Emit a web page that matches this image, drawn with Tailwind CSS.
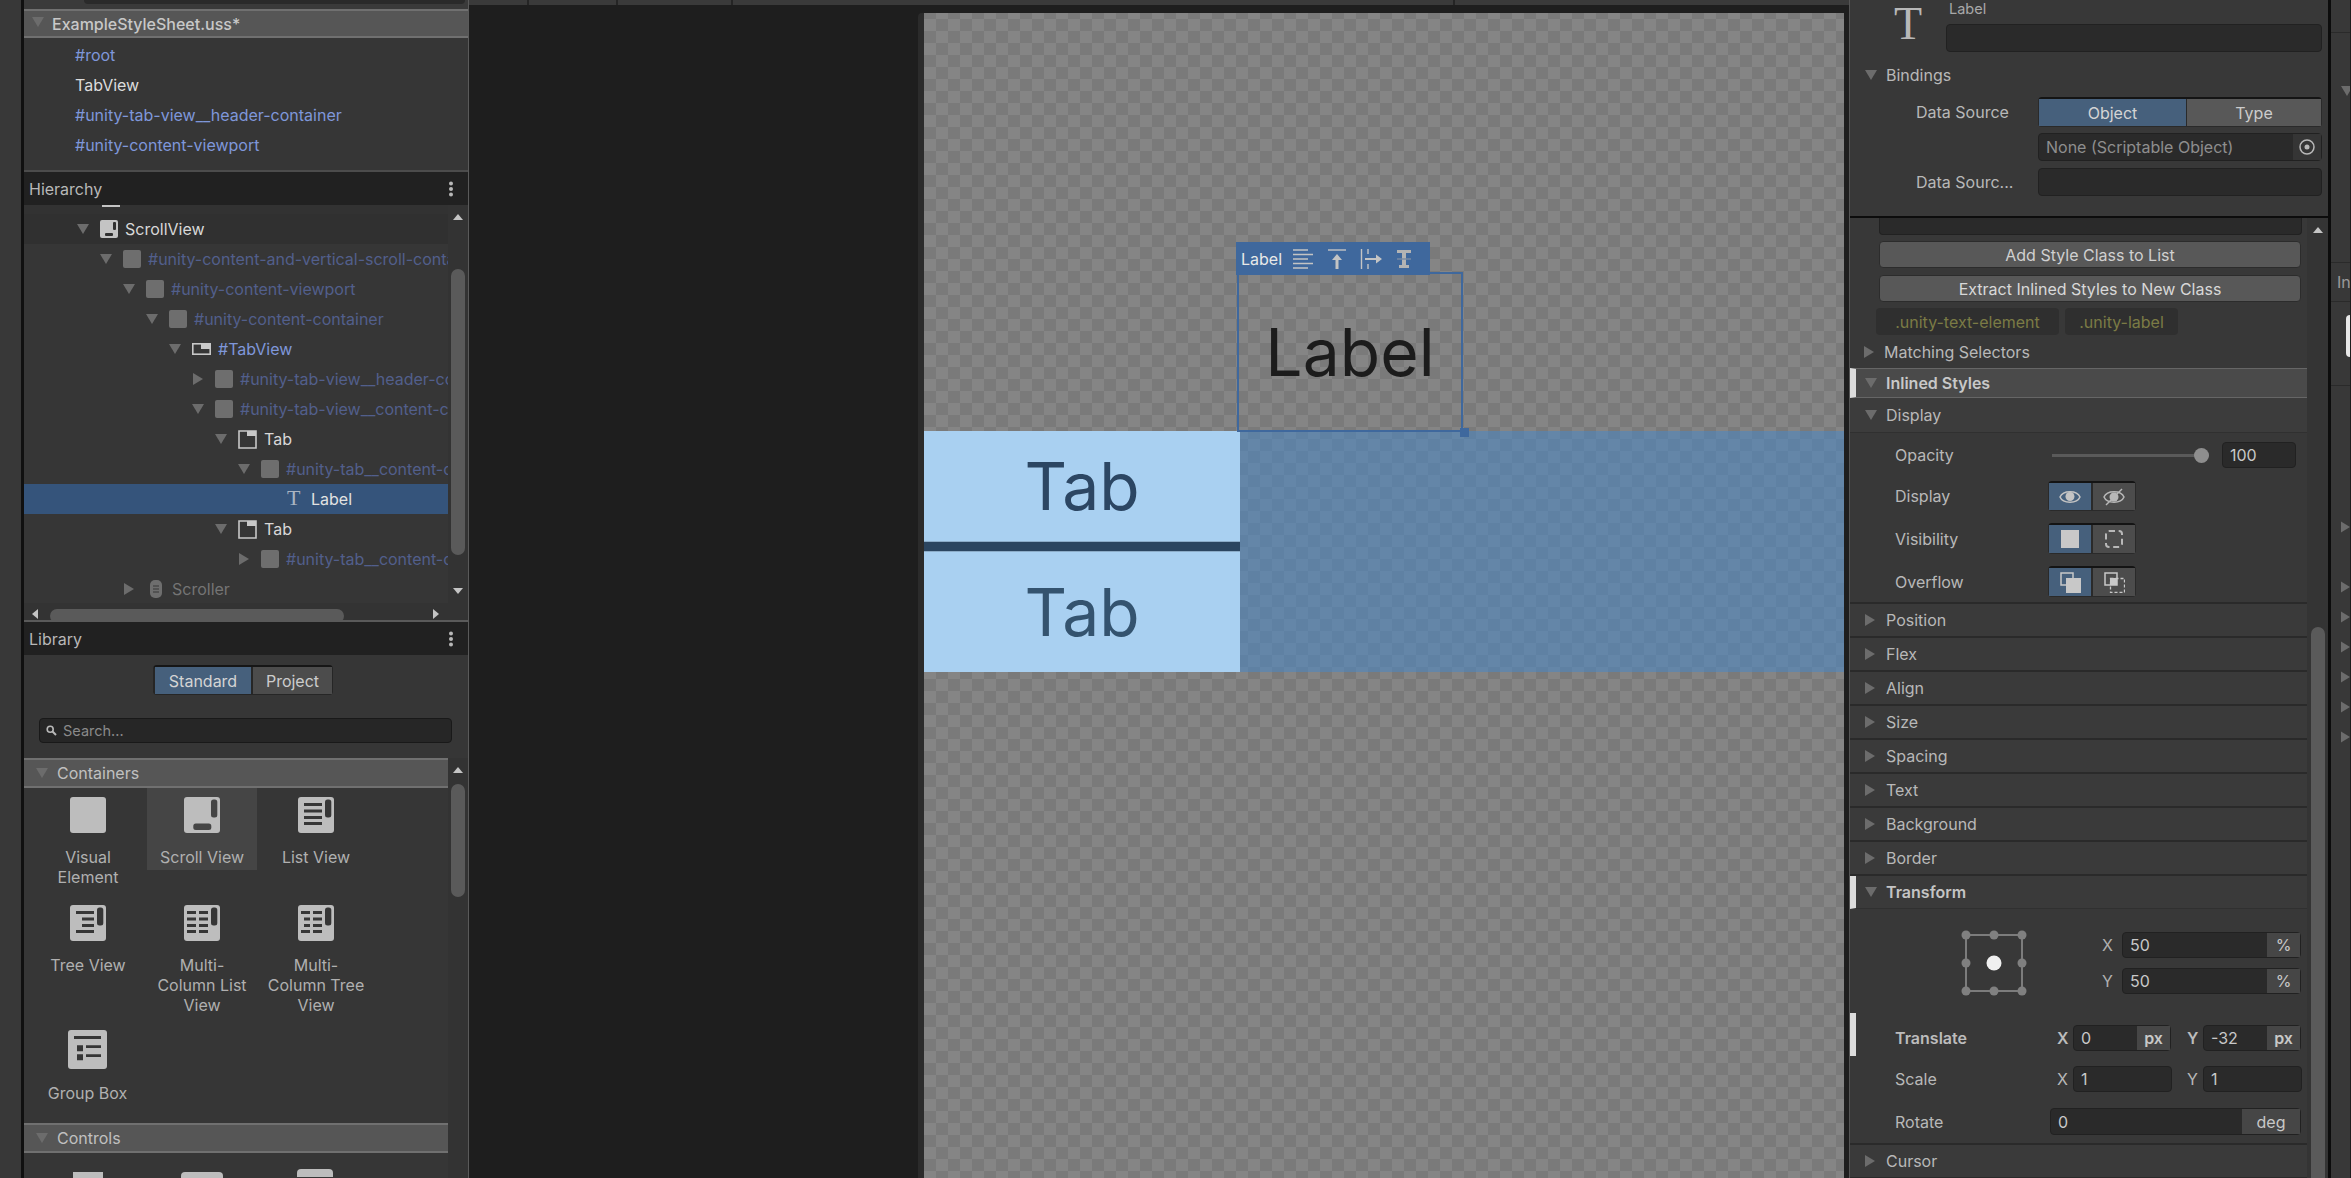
<!DOCTYPE html>
<html lang="en">
<head>
  <meta charset="UTF-8">
  <title>UI Builder</title>
  <script src="https://cdn.jsdelivr.net/npm/@tailwindcss/browser@4"></script>
</head>
<body class="bg-[#1e1e1e] overflow-hidden font-['Inter',sans-serif] text-[16px] leading-5 text-[#b8b8b8]">
  <svg class="hidden">
    <symbol id="down" viewBox="0 0 12 10"><path d="M0 0h12L6 10z" fill="#6c6c6c"/></symbol>
    <symbol id="right" viewBox="0 0 10 12"><path d="M0 0v12l10-6z" fill="#6c6c6c"/></symbol>
    <symbol id="sq" viewBox="0 0 18 18"><rect width="18" height="18" rx="2" fill="#6e6e6e"/></symbol>
    <symbol id="tab" viewBox="0 0 19 19"><path d="M1 1h17v17H1z" fill="none" stroke="#c8c8c8" stroke-width="1.6"/><path d="M9 1h9v5H9z" fill="#c8c8c8"/></symbol>
    <symbol id="dots" viewBox="0 0 6 16"><circle cx="3" cy="2.5" r="2" fill="#b8b8b8"/><circle cx="3" cy="8" r="2" fill="#b8b8b8"/><circle cx="3" cy="13.5" r="2" fill="#b8b8b8"/></symbol>
  </svg>

  <div class="flex w-[2351px] h-[1178px]">
    <!-- left edge -->
    <div class="w-[21px] bg-[#383838]"></div>
    <div class="w-[3px] bg-[#101010]"></div>

    <!-- left column -->
    <div class="w-[445px] flex flex-col border-r border-[#5a5a5a] bg-[#363636] overflow-hidden shrink-0">
      <div class="h-[9px] bg-[#3a3a3a] pl-[60px]"><div class="h-[4px] w-[381px] bg-[#2a2a2a] rounded-b"></div></div>
      <div class="h-[29px] bg-[#565656] border-y-2 border-[#707070] flex items-center pl-[8px] font-medium text-[#c8c8c8]">
        <svg class="w-[12px] h-[10px] mr-[8px] -mt-[3px]"><use href="#down"/></svg>ExampleStyleSheet.uss*
      </div>
      <div class="h-[132px] pt-[2px] pl-[51px] text-[#7f97da]">
        <div class="h-[30px] flex items-center">#root</div>
        <div class="h-[30px] flex items-center text-[#dcdcdc]">TabView</div>
        <div class="h-[30px] flex items-center">#unity-tab-view__header-container</div>
        <div class="h-[30px] flex items-center">#unity-content-viewport</div>
      </div>
      <div class="h-[2px] bg-[#4c4c4c]"></div>
      <div class="h-[33px] bg-[#212121] flex items-center justify-between pl-[5px] pr-[14px]">
        <span>Hierarchy</span><svg class="w-[6px] h-[16px]"><use href="#dots"/></svg>
      </div>

      <!-- hierarchy tree -->
      <div class="h-[398px] flex">
        <div class="w-[424px] overflow-hidden whitespace-nowrap text-[#525f8c]">
          <div class="h-[9px] bg-[#323232] pl-[78px]"><div class="w-[18px] h-[2px] bg-[#c4c4c4]"></div></div>
          <div class="h-[30px] flex items-center pl-[53px] bg-[#303030] text-[#d8d8d8]">
            <svg class="w-[12px] h-[10px] mr-[11px] shrink-0"><use href="#down"/></svg>
            <svg class="w-[18px] h-[18px] mr-[7px] shrink-0" viewBox="0 0 18 18"><rect width="18" height="18" rx="2" fill="#c4c4c4"/><rect x="13" y="2" width="3" height="8" rx="1" fill="#303030"/><rect x="5" y="13" width="8" height="3" rx="1" fill="#303030"/></svg>ScrollView
          </div>
          <div class="h-[30px] flex items-center pl-[76px]">
            <svg class="w-[12px] h-[10px] mr-[11px] shrink-0"><use href="#down"/></svg>
            <svg class="w-[18px] h-[18px] mr-[7px] shrink-0"><use href="#sq"/></svg>#unity-content-and-vertical-scroll-container
          </div>
          <div class="h-[30px] flex items-center pl-[99px]">
            <svg class="w-[12px] h-[10px] mr-[11px] shrink-0"><use href="#down"/></svg>
            <svg class="w-[18px] h-[18px] mr-[7px] shrink-0"><use href="#sq"/></svg>#unity-content-viewport
          </div>
          <div class="h-[30px] flex items-center pl-[122px]">
            <svg class="w-[12px] h-[10px] mr-[11px] shrink-0"><use href="#down"/></svg>
            <svg class="w-[18px] h-[18px] mr-[7px] shrink-0"><use href="#sq"/></svg>#unity-content-container
          </div>
          <div class="h-[30px] flex items-center pl-[145px] text-[#7f97da]">
            <svg class="w-[12px] h-[10px] mr-[11px] shrink-0"><use href="#down"/></svg>
            <svg class="w-[19px] h-[12px] mr-[7px] shrink-0" viewBox="0 0 19 12"><rect x=".8" y=".8" width="17.4" height="10.4" fill="none" stroke="#c8c8c8" stroke-width="1.6"/><rect x="9" y="1" width="9" height="5" fill="#c8c8c8"/></svg>#TabView
          </div>
          <div class="h-[30px] flex items-center pl-[169px]">
            <svg class="w-[10px] h-[12px] mr-[12px] shrink-0"><use href="#right"/></svg>
            <svg class="w-[18px] h-[18px] mr-[7px] shrink-0"><use href="#sq"/></svg>#unity-tab-view__header-container
          </div>
          <div class="h-[30px] flex items-center pl-[168px]">
            <svg class="w-[12px] h-[10px] mr-[11px] shrink-0"><use href="#down"/></svg>
            <svg class="w-[18px] h-[18px] mr-[7px] shrink-0"><use href="#sq"/></svg>#unity-tab-view__content-container
          </div>
          <div class="h-[30px] flex items-center pl-[191px] text-[#d8d8d8]">
            <svg class="w-[12px] h-[10px] mr-[11px] shrink-0"><use href="#down"/></svg>
            <svg class="w-[19px] h-[19px] mr-[7px] shrink-0"><use href="#tab"/></svg>Tab
          </div>
          <div class="h-[30px] flex items-center pl-[214px]">
            <svg class="w-[12px] h-[10px] mr-[11px] shrink-0"><use href="#down"/></svg>
            <svg class="w-[18px] h-[18px] mr-[7px] shrink-0"><use href="#sq"/></svg>#unity-tab__content-container
          </div>
          <div class="h-[30px] flex items-center pl-[263px] bg-[#35547b] text-[#e2e2e2]">
            <span class="font-['Liberation_Serif',serif] text-[22px] text-[#aab4c2] w-[24px] -mt-[3px]">T</span>Label
          </div>
          <div class="h-[30px] flex items-center pl-[191px] text-[#d8d8d8]">
            <svg class="w-[12px] h-[10px] mr-[11px] shrink-0"><use href="#down"/></svg>
            <svg class="w-[19px] h-[19px] mr-[7px] shrink-0"><use href="#tab"/></svg>Tab
          </div>
          <div class="h-[30px] flex items-center pl-[215px]">
            <svg class="w-[10px] h-[12px] mr-[12px] shrink-0"><use href="#right"/></svg>
            <svg class="w-[18px] h-[18px] mr-[7px] shrink-0"><use href="#sq"/></svg>#unity-tab__content-container
          </div>
          <div class="h-[30px] flex items-center pl-[100px] text-[#747474]">
            <svg class="w-[10px] h-[12px] mr-[16px] shrink-0"><use href="#right"/></svg>
            <svg class="w-[12px] h-[18px] mr-[10px] shrink-0" viewBox="0 0 12 18"><rect width="12" height="18" rx="5" fill="#6e6e6e"/><path d="M3 6h6M3 9h6M3 12h6" stroke="#363636"/></svg>Scroller
          </div>
        </div>
        <div class="w-[20px] bg-[#333333] flex flex-col items-center">
          <svg class="w-[10px] h-[6px] mt-[9px]" viewBox="0 0 10 6"><path d="M0 6h10L5 0z" fill="#c4c4c4"/></svg>
          <div class="w-[14px] h-[286px] mt-[49px] rounded-full bg-[#5a5a5a]"></div>
          <svg class="w-[10px] h-[6px] mt-[33px]" viewBox="0 0 10 6"><path d="M0 0h10L5 6z" fill="#c4c4c4"/></svg>
        </div>
      </div>
      <div class="h-[17px] bg-[#333333] flex items-center pl-[8px]">
        <svg class="w-[6px] h-[10px] mt-[4px]" viewBox="0 0 6 10"><path d="M6 0v10L0 5z" fill="#c4c4c4"/></svg>
        <div class="w-[294px] h-[14px] ml-[12px] mt-[8px] rounded-full bg-[#5a5a5a]"></div>
        <svg class="w-[6px] h-[10px] ml-[89px] mt-[4px]" viewBox="0 0 6 10"><path d="M0 0v10l6-5z" fill="#c4c4c4"/></svg>
      </div>
      <div class="h-[2px] bg-[#5a5a5a]"></div>

      <!-- library -->
      <div class="h-[33px] bg-[#212121] flex items-center justify-between pl-[5px] pr-[14px]">
        <span>Library</span><svg class="w-[6px] h-[16px]"><use href="#dots"/></svg>
      </div>
      <div class="mt-[10px] ml-[129px] w-[180px] h-[30px] flex bg-[#262626] rounded border border-[#262626] border-t-2 border-t-[#161616] text-center">
        <div class="w-[96px] ml-px bg-[#46607c] text-[#d4d4d4] flex items-center justify-center">Standard</div>
        <div class="w-[79px] ml-[2px] bg-[#4c4c4c] text-[#cccccc] flex items-center justify-center">Project</div>
      </div>
      <div class="mt-[23px] ml-[15px] w-[413px] h-[25px] bg-[#262626] border border-[#191919] rounded flex items-center pl-[6px] text-[14.5px] text-[#8a8a8a]">
        <svg class="w-[11px] h-[11px] mr-[6px]" viewBox="0 0 11 11"><circle cx="4.2" cy="4.2" r="3" fill="none" stroke="#b8b8b8" stroke-width="1.6"/><path d="M6.5 6.5 10 10" stroke="#b8b8b8" stroke-width="2"/></svg>Search...
      </div>
      <div class="mt-[15px] flex h-[420px]">
        <div class="w-[424px] overflow-hidden">
          <div class="h-[30px] bg-[#565656] border-y-2 border-[#707070] flex items-center pl-[12px] text-[#c0c0c0]">
            <svg class="w-[12px] h-[10px] mr-[9px]"><use href="#down"/></svg>Containers
          </div>
          <div class="h-[335px] grid grid-cols-[114px_114px_114px] grid-rows-[108px_125px_102px] pl-[7px] text-center text-[#b0b0b0]">
            <div class="flex flex-col items-center pt-[9px]">
              <svg class="w-[36px] h-[36px] mb-[14px]" viewBox="0 0 36 36"><rect width="36" height="36" rx="3" fill="#bdbdbd"/></svg>Visual<br>Element
            </div>
            <div class="flex flex-col items-center">
              <div class="w-[110px] h-[82px] pt-[9px] bg-[#454545] flex flex-col items-center">
                <svg class="w-[36px] h-[36px] mb-[14px]" viewBox="0 0 36 36"><rect width="36" height="36" rx="3" fill="#bdbdbd"/><rect x="27" y="2.5" width="6.3" height="18" rx="2.5" fill="#454545"/><rect x="9.3" y="26.6" width="18" height="6.3" rx="2.5" fill="#454545"/></svg>Scroll View
              </div>
            </div>
            <div class="flex flex-col items-center pt-[9px]">
              <svg class="w-[36px] h-[36px] mb-[14px]" viewBox="0 0 36 36"><rect width="36" height="36" rx="3" fill="#bdbdbd"/><path d="M6 6h18v3H6zM6 12.5h18v3H6zM6 19h18v3H6zM6 25h18v3H6z" fill="#363636"/><rect x="27" y="2.5" width="6.3" height="18" rx="2.5" fill="#363636"/></svg>List View
            </div>
            <div class="flex flex-col items-center pt-[9px]">
              <svg class="w-[36px] h-[36px] mb-[14px]" viewBox="0 0 36 36"><rect width="36" height="36" rx="3" fill="#bdbdbd"/><path d="M6 6h18v3H6zM12 12.5h12v3H12zM12 19h12v3H12zM6 25h18v3H6z" fill="#363636"/><rect x="27" y="2.5" width="6.3" height="18" rx="2.5" fill="#363636"/></svg>Tree View
            </div>
            <div class="flex flex-col items-center pt-[9px]">
              <svg class="w-[36px] h-[36px] mb-[14px]" viewBox="0 0 36 36"><rect width="36" height="36" rx="3" fill="#bdbdbd"/><path d="M3 6h9v3H3zM15 6h9v3h-9zM3 12.5h9v3H3zM15 12.5h9v3h-9zM3 19h9v3H3zM15 19h9v3h-9zM3 25h9v3H3zM15 25h9v3h-9z" fill="#363636"/><rect x="27" y="2.5" width="6.3" height="18" rx="2.5" fill="#363636"/></svg>Multi-<br>Column List<br>View
            </div>
            <div class="flex flex-col items-center pt-[9px]">
              <svg class="w-[36px] h-[36px] mb-[14px]" viewBox="0 0 36 36"><rect width="36" height="36" rx="3" fill="#bdbdbd"/><path d="M3 6h9v3H3zM15 6h9v3h-9zM6 12.5h6v3H6zM15 12.5h9v3h-9zM6 19h6v3H6zM15 19h9v3h-9zM3 25h9v3H3zM15 25h9v3h-9z" fill="#363636"/><rect x="27" y="2.5" width="6.3" height="18" rx="2.5" fill="#363636"/></svg>Multi-<br>Column Tree<br>View
            </div>
            <div class="flex flex-col items-center pt-[9px] -ml-[1px]">
              <svg class="w-[39px] h-[39px] mb-[14px]" viewBox="0 0 39 39"><rect width="39" height="39" rx="3" fill="#bdbdbd"/><path d="M6 6h27v3H6zM9 15.3h6v6H9zM9 24.3h6v6H9zM18 15.3h15v2.7H18zM18 24.3h15v2.7H18z" fill="#363636"/></svg>Group Box
            </div>
          </div>
          <div class="h-[30px] bg-[#565656] border-y-2 border-[#707070] flex items-center pl-[12px] text-[#c0c0c0]">
            <svg class="w-[12px] h-[10px] mr-[9px]"><use href="#down"/></svg>Controls
          </div>
          <div class="flex items-start pt-[19px] pl-[49px]">
            <div class="w-[30px] h-[6px] bg-[#bdbdbd]"></div>
            <div class="w-[42px] h-[6px] ml-[78px] bg-[#bdbdbd] rounded-t"></div>
            <div class="w-[36px] h-[8px] ml-[74px] -mt-[3px] bg-[#bdbdbd] rounded-t"></div>
          </div>
        </div>
        <div class="w-[20px] bg-[#333333] flex flex-col items-center">
          <svg class="w-[10px] h-[6px] mt-[9px]" viewBox="0 0 10 6"><path d="M0 6h10L5 0z" fill="#c4c4c4"/></svg>
          <div class="w-[14px] h-[113px] mt-[11px] rounded-full bg-[#5a5a5a]"></div>
        </div>
      </div>
    </div>

    <!-- canvas column -->
    <div class="w-[1381px] flex flex-col shrink-0 border-r border-[#555555]">
      <div class="h-[5px] bg-[#3a3a3a] flex">
        <div class="w-[60px] border-r-2 border-[#252525]"></div>
        <div class="w-[89px] border-r-2 border-[#252525]"></div>
        <div class="w-[115px] border-r-2 border-[#252525]"></div>
        <div class="w-[722px] border-r-2 border-[#252525]"></div>
      </div>
      <div class="flex-1 pt-[8px] pl-[449px] flex">
        <div class="w-[6px] bg-[#2b2b2b] rounded-tl"></div>
        <div class="relative w-[920px] h-[1165px] bg-[conic-gradient(#7a7a7a_25%,#858585_0_50%,#7a7a7a_0_75%,#858585_0)] bg-size-[24px_24px] bg-position-[0_6px]">
          <div class="h-[418px]"></div>
          <div class="flex h-[241px]">
            <div class="w-[316px] flex flex-col text-[66px] leading-none bg-[#a9d0f1]">
              <div class="h-[111px] flex items-center justify-center text-[#2c4663] border-b border-[#8cacc8]">Tab</div>
              <div class="h-[9px] bg-[#2b4560]"></div>
              <div class="flex-1 flex items-center justify-center text-[#34536f] border-t border-[#8cacc8]">Tab</div>
            </div>
            <div class="flex-1 bg-[#4488cc]/50"></div>
          </div>

          <!-- selected label, translated over the tab content -->
          <div class="absolute left-[313px] top-[259px] w-[226px] h-[160px] border-2 border-[#3f689d] flex items-center justify-center text-[66px] leading-none text-[#1c1c1c]">Label</div>
          <div class="absolute left-[536px] top-[415px] w-[9px] h-[9px] bg-[#3f689d]"></div>
          <div class="absolute left-[312px] top-[229px] w-[194px] h-[33px] bg-[#3f689d] flex items-center pl-[5px] text-[#e8e8e8]">
            <span>Label</span>
            <svg class="w-[22px] h-[22px] ml-[10px]" viewBox="0 0 22 22" stroke="#c4c4c4" stroke-width="1.4"><path d="M1 2h15M1 6.500h20M1 11h15M1 15.500h20M1 20h15"/></svg>
            <svg class="w-[20px] h-[22px] ml-[13px]" viewBox="0 0 20 22"><path d="M1 2h18" stroke="#c4c4c4" stroke-width="1.4"/><path d="M10 6l5 6h-3.500v9h-3v-9H5z" fill="#c4c4c4"/></svg>
            <svg class="w-[22px] h-[22px] ml-[13px]" viewBox="0 0 22 22"><path d="M1.500 1v20" stroke="#c4c4c4" stroke-width="1.4"/><path d="M8 1v5M8 16v5" stroke="#c4c4c4" stroke-width="1.4"/><path d="M5 10h11V6.500l6 4.500-6 4.500V12H5z" fill="#c4c4c4"/></svg>
            <svg class="w-[16px] h-[22px] ml-[14px]" viewBox="0 0 16 22"><path d="M1 2h14v3h-5v12h3v3H3v-3h3V5H1z" fill="#b4b4b4"/><path d="M1 11h14" stroke="#7a8ca4" stroke-width="1.4"/></svg>
          </div>
        </div>
      </div>
    </div>

    <!-- inspector -->
    <div class="w-[478px] flex flex-col bg-[#383838] shrink-0 overflow-hidden">
      <div class="h-[218px] border-b-2 border-[#0c0c0c] shrink-0">
        <div class="h-[53px] flex pl-[44px]">
          <div class="w-[52px] font-['Liberation_Serif',serif] text-[46px] leading-[46px] text-[#b8b8b8] pt-[1px]">T</div>
          <div class="w-[376px]">
            <div class="h-[25px] -mt-[1px] pl-[3px] text-[14.5px] text-[#a8a8a8]">Label</div>
            <div class="h-[28px] bg-[#2a2a2a] border border-[#212121] rounded"></div>
          </div>
        </div>
        <div class="mt-[8px] h-[28px] flex items-center pl-[15px]">
          <svg class="w-[12px] h-[10px] mr-[9px]"><use href="#down"/></svg>Bindings
        </div>
        <div class="mt-[9px] h-[28px] flex items-center pl-[66px]">
          <div class="w-[122px]">Data Source</div>
          <div class="w-[284px] h-[30px] flex bg-[#2a2a2a] rounded border border-[#2a2a2a] border-t-2 border-t-[#141414]">
            <div class="w-[147px] bg-[#46607c] text-[#d4d4d4] flex items-center justify-center">Object</div>
            <div class="flex-1 ml-[1px] bg-[#585858] text-[#cccccc] flex items-center justify-center">Type</div>
          </div>
        </div>
        <div class="mt-[7px] h-[28px] flex items-center pl-[188px]">
          <div class="w-[284px] h-[28px] bg-[#2a2a2a] border border-[#212121] rounded flex items-center justify-between pl-[7px] text-[#8e8e8e]">
            None (Scriptable Object)
            <div class="w-[28px] h-full bg-[#353535] flex items-center justify-center">
              <svg class="w-[16px] h-[16px]" viewBox="0 0 16 16"><circle cx="8" cy="8" r="7" fill="none" stroke="#b8b8b8" stroke-width="1.5"/><circle cx="8" cy="8" r="2.500" fill="#b8b8b8"/></svg>
            </div>
          </div>
        </div>
        <div class="mt-[7px] h-[28px] flex items-center pl-[66px]">
          <div class="w-[122px]">Data Sourc...</div>
          <div class="w-[284px] h-[28px] bg-[#2a2a2a] border border-[#212121] rounded"></div>
        </div>
      </div>

      <div class="flex flex-1">
        <div class="w-[457px] overflow-hidden">
          <div class="h-[17px] ml-[29px] w-[423px] bg-[#2a2a2a] border-x border-b border-[#212121] rounded-b"></div>
          <div class="mt-[6px] ml-[29px] w-[422px] h-[27px] bg-[#585858] border border-[#2c2c2c] rounded flex items-center justify-center text-[#d0d0d0]">Add Style Class to List</div>
          <div class="mt-[7px] ml-[29px] w-[422px] h-[27px] bg-[#585858] border border-[#2c2c2c] rounded flex items-center justify-center text-[#d8d8d8]">Extract Inlined Styles to New Class</div>
          <div class="mt-[6px] ml-[26px] h-[27px] flex gap-[6px] text-[#7b7b45]">
            <div class="w-[183px] bg-[#2f2f2f] rounded flex items-center justify-center">.unity-text-element</div>
            <div class="w-[113px] bg-[#2f2f2f] rounded flex items-center justify-center">.unity-label</div>
          </div>
          <div class="h-[33px] flex items-center pl-[14px]">
            <svg class="w-[10px] h-[12px] mr-[10px]"><use href="#right"/></svg>Matching Selectors
          </div>
          <div class="h-[30px] bg-[#4a4a4a] border-y border-[#666666] flex items-center border-l-[6px] border-l-[#dcdcdc] pl-[9px] font-semibold text-[#c8c8c8]">
            <svg class="w-[12px] h-[10px] mr-[9px]"><use href="#down"/></svg>Inlined Styles
          </div>
          <div class="h-[35px] bg-[#3c3c3c] border-b border-[#303030] flex items-center pl-[15px]">
            <svg class="w-[12px] h-[10px] mr-[9px]"><use href="#down"/></svg>Display
          </div>

          <div class="mt-[9px] h-[26px] flex items-center pl-[45px]">
            <div class="w-[157px]">Opacity</div>
            <div class="w-[157px] h-[3px] bg-[#5a5a5a] flex items-center justify-end"><div class="w-[15px] h-[15px] shrink-0 rounded-full bg-[#8e8e8e]"></div></div>
            <div class="ml-[13px] w-[74px] h-[26px] bg-[#2a2a2a] border border-[#212121] rounded flex items-center pl-[7px] text-[#c8c8c8]">100</div>
          </div>
          <div class="mt-[13px] h-[30px] flex items-center pl-[45px]">
            <div class="w-[153px]">Display</div>
            <div class="w-[88px] h-[30px] flex bg-[#2a2a2a] rounded border border-[#2a2a2a] border-t-2 border-t-[#141414]">
              <div class="w-[42px] bg-[#46607c] flex items-center justify-center">
                <svg class="w-[22px] h-[14px]" viewBox="0 0 22 14"><path d="M1 7c3-7 17-7 20 0-3 7-17 7-20 0z" fill="none" stroke="#c4c4c4" stroke-width="1.5"/><circle cx="11" cy="6.500" r="4.500" fill="#c4c4c4"/></svg>
              </div>
              <div class="w-[42px] ml-[2px] bg-[#4c4c4c] flex items-center justify-center">
                <svg class="w-[22px] h-[18px]" viewBox="0 0 22 18"><path d="M1 9c3-7 17-7 20 0-3 7-17 7-20 0z" fill="none" stroke="#b8b8b8" stroke-width="1.5"/><circle cx="11" cy="9" r="4.500" fill="#b8b8b8"/><path d="M3 17 19 1" stroke="#b8b8b8" stroke-width="1.500"/></svg>
              </div>
            </div>
          </div>
          <div class="mt-[12px] h-[31px] flex items-center pl-[45px]">
            <div class="w-[153px]">Visibility</div>
            <div class="w-[88px] h-[31px] flex bg-[#2a2a2a] rounded border border-[#2a2a2a] border-t-2 border-t-[#141414]">
              <div class="w-[42px] bg-[#46607c] flex items-center justify-center"><div class="w-[18px] h-[18px] bg-[#c8c8c8]"></div></div>
              <div class="w-[42px] ml-[2px] bg-[#4c4c4c] flex items-center justify-center"><div class="w-[18px] h-[18px] border-2 border-dashed border-[#b8b8b8] rounded-sm"></div></div>
            </div>
          </div>
          <div class="mt-[12px] h-[31px] flex items-center pl-[45px]">
            <div class="w-[153px]">Overflow</div>
            <div class="w-[88px] h-[31px] flex bg-[#2a2a2a] rounded border border-[#2a2a2a] border-t-2 border-t-[#141414]">
              <div class="w-[42px] bg-[#46607c] flex items-center justify-center">
                <svg class="w-[21px] h-[21px]" viewBox="0 0 21 21"><rect x="1" y="1" width="12" height="12" fill="none" stroke="#c8c8c8" stroke-width="1.5"/><rect x="6" y="6" width="15" height="15" fill="#c8c8c8"/></svg>
              </div>
              <div class="w-[42px] ml-[2px] bg-[#4c4c4c] flex items-center justify-center">
                <svg class="w-[21px] h-[21px]" viewBox="0 0 21 21"><rect x="1" y="1" width="12" height="12" fill="none" stroke="#c8c8c8" stroke-width="1.5"/><rect x="6" y="6" width="7" height="7" fill="#c8c8c8"/><rect x="6.500" y="6.500" width="14" height="14" fill="none" stroke="#c8c8c8" stroke-width="1.300" stroke-dasharray="3 2"/></svg>
              </div>
            </div>
          </div>
          <div class="h-[7px] border-b-2 border-[#2a2a2a]"></div>

          <div class="h-[34px] bg-[#3a3a3a] border-b-2 border-[#2a2a2a] flex items-center pl-[15px]"><svg class="w-[10px] h-[12px] mr-[11px]"><use href="#right"/></svg>Position</div>
          <div class="h-[34px] bg-[#3a3a3a] border-b-2 border-[#2a2a2a] flex items-center pl-[15px]"><svg class="w-[10px] h-[12px] mr-[11px]"><use href="#right"/></svg>Flex</div>
          <div class="h-[34px] bg-[#3a3a3a] border-b-2 border-[#2a2a2a] flex items-center pl-[15px]"><svg class="w-[10px] h-[12px] mr-[11px]"><use href="#right"/></svg>Align</div>
          <div class="h-[34px] bg-[#3a3a3a] border-b-2 border-[#2a2a2a] flex items-center pl-[15px]"><svg class="w-[10px] h-[12px] mr-[11px]"><use href="#right"/></svg>Size</div>
          <div class="h-[34px] bg-[#3a3a3a] border-b-2 border-[#2a2a2a] flex items-center pl-[15px]"><svg class="w-[10px] h-[12px] mr-[11px]"><use href="#right"/></svg>Spacing</div>
          <div class="h-[34px] bg-[#3a3a3a] border-b-2 border-[#2a2a2a] flex items-center pl-[15px]"><svg class="w-[10px] h-[12px] mr-[11px]"><use href="#right"/></svg>Text</div>
          <div class="h-[34px] bg-[#3a3a3a] border-b-2 border-[#2a2a2a] flex items-center pl-[15px]"><svg class="w-[10px] h-[12px] mr-[11px]"><use href="#right"/></svg>Background</div>
          <div class="h-[34px] bg-[#3a3a3a] border-b-2 border-[#2a2a2a] flex items-center pl-[15px]"><svg class="w-[10px] h-[12px] mr-[11px]"><use href="#right"/></svg>Border</div>
          <div class="h-[33px] bg-[#3a3a3a] border-b border-[#303030] border-l-[6px] border-l-[#dcdcdc] flex items-center pl-[9px] font-semibold text-[#c4c4c4]"><svg class="w-[12px] h-[10px] mr-[9px]"><use href="#down"/></svg>Transform</div>

          <div class="mt-[16px] h-[76px] flex items-center">
            <svg class="w-[70px] h-[70px] ml-[109px] shrink-0" viewBox="0 0 70 70">
              <rect x="7" y="7" width="56" height="56" fill="none" stroke="#7c7c7c" stroke-width="2"/>
              <g fill="#808080"><circle cx="7" cy="7" r="4.500"/><circle cx="35" cy="7" r="4.500"/><circle cx="63" cy="7" r="4.500"/><circle cx="7" cy="35" r="4.500"/><circle cx="63" cy="35" r="4.500"/><circle cx="7" cy="63" r="4.500"/><circle cx="35" cy="63" r="4.500"/><circle cx="63" cy="63" r="4.500"/></g>
              <circle cx="35" cy="35" r="7.500" fill="#f0f0f0"/>
            </svg>
            <div class="ml-[73px] flex flex-col gap-[10px] text-[#c8c8c8]">
              <div class="flex items-center h-[26px]"><span class="w-[20px] text-[#b0b0b0]">X</span><div class="w-[179px] h-[26px] bg-[#2a2a2a] border border-[#212121] rounded flex items-center justify-between pl-[7px]">50<span class="w-[33px] h-full bg-[#464646] flex items-center justify-center">%</span></div></div>
              <div class="flex items-center h-[26px]"><span class="w-[20px] text-[#b0b0b0]">Y</span><div class="w-[179px] h-[26px] bg-[#2a2a2a] border border-[#212121] rounded flex items-center justify-between pl-[7px]">50<span class="w-[33px] h-full bg-[#464646] flex items-center justify-center">%</span></div></div>
            </div>
          </div>

          <div class="mt-[12px] h-[43px] border-l-[6px] border-[#dcdcdc] pl-[39px] flex items-center pt-[7px] font-semibold text-[#bcbcbc]">
            <div class="w-[162px]">Translate</div>
            <span class="w-[16px]">X</span>
            <div class="w-[98px] h-[26px] bg-[#2a2a2a] border border-[#212121] rounded flex items-center justify-between pl-[7px] font-normal text-[#c8c8c8]">0<span class="w-[33px] h-full bg-[#464646] flex items-center justify-center font-semibold">px</span></div>
            <span class="w-[16px] ml-[16px]">Y</span>
            <div class="w-[98px] h-[26px] bg-[#2a2a2a] border border-[#212121] rounded flex items-center justify-between pl-[7px] font-normal text-[#c8c8c8]">-32<span class="w-[33px] h-full bg-[#464646] flex items-center justify-center font-semibold">px</span></div>
          </div>
          <div class="mt-[10px] h-[26px] pl-[45px] flex items-center">
            <div class="w-[162px]">Scale</div>
            <span class="w-[16px]">X</span>
            <div class="w-[99px] h-[26px] bg-[#2a2a2a] border border-[#212121] rounded flex items-center pl-[7px] text-[#c8c8c8]">1</div>
            <span class="w-[16px] ml-[15px]">Y</span>
            <div class="w-[99px] h-[26px] bg-[#2a2a2a] border border-[#212121] rounded flex items-center pl-[7px] text-[#c8c8c8]">1</div>
          </div>
          <div class="mt-[16px] h-[27px] pl-[45px] flex items-center">
            <div class="w-[155px]">Rotate</div>
            <div class="w-[251px] h-[27px] bg-[#2a2a2a] border border-[#212121] rounded flex items-center justify-between pl-[7px] text-[#c8c8c8]">0<span class="w-[58px] h-full bg-[#464646] flex items-center justify-center">deg</span></div>
          </div>
          <div class="h-[10px] border-b-2 border-[#2a2a2a]"></div>
          <div class="h-[34px] bg-[#3a3a3a] border-b-2 border-[#2a2a2a] flex items-center pl-[15px]"><svg class="w-[10px] h-[12px] mr-[11px]"><use href="#right"/></svg>Cursor</div>
        </div>
        <div class="w-[21px] bg-[#343434] flex flex-col items-center">
          <svg class="w-[10px] h-[6px] mt-[9px]" viewBox="0 0 10 6"><path d="M0 6h10L5 0z" fill="#c4c4c4"/></svg>
          <div class="w-[14px] flex-1 mt-[394px] rounded-t-full bg-[#5a5a5a]"></div>
        </div>
      </div>
    </div>
    <div class="w-[3px] bg-[#0c0c0c] shrink-0"></div>

    <!-- clipped panel on the far right -->
    <div class="w-[19px] bg-[#383838] overflow-hidden shrink-0">
      <div class="h-[33px] border-b border-[#2a2a2a]"></div>
      <svg class="w-[9px] h-[10px] mt-[53px] ml-[10px]" viewBox="0 0 9 10"><path d="M0 0h12L6 10z" fill="#6c6c6c"/></svg>
      <div class="h-[167px] border-b border-[#2a2a2a]"></div>
      <div class="h-[39px] flex items-center pl-[6px] text-[#9a9a9a] border-b border-[#2a2a2a]">In</div>
      <div class="mt-[13px] ml-[15px] w-[8px] h-[42px] rounded-l bg-[#e8e8e8]"></div>
      <div class="h-[29px] border-b border-[#2a2a2a]"></div>
      <svg class="block w-[9px] h-[12px] mt-[135px] ml-[10px]"><use href="#right"/></svg>
      <svg class="block w-[9px] h-[12px] mt-[48px] ml-[10px]"><use href="#right"/></svg>
      <svg class="block w-[9px] h-[12px] mt-[18px] ml-[10px]"><use href="#right"/></svg>
      <svg class="block w-[9px] h-[12px] mt-[18px] ml-[10px]"><use href="#right"/></svg>
      <svg class="block w-[9px] h-[12px] mt-[18px] ml-[10px]"><use href="#right"/></svg>
      <svg class="block w-[9px] h-[12px] mt-[18px] ml-[10px]"><use href="#right"/></svg>
      <svg class="block w-[9px] h-[12px] mt-[18px] ml-[10px]"><use href="#right"/></svg>
    </div>
  </div>
</body>
</html>
